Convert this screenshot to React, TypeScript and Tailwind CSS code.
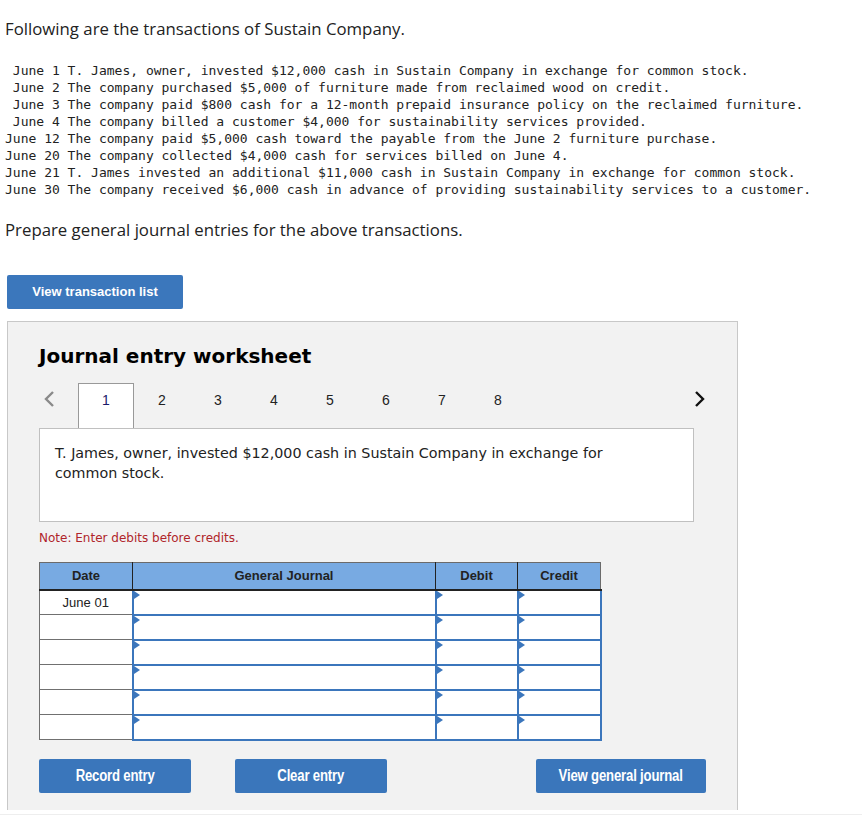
import React from "react";

const TRANSACTIONS = [
  " June 1 T. James, owner, invested $12,000 cash in Sustain Company in exchange for common stock.",
  " June 2 The company purchased $5,000 of furniture made from reclaimed wood on credit.",
  " June 3 The company paid $800 cash for a 12-month prepaid insurance policy on the reclaimed furniture.",
  " June 4 The company billed a customer $4,000 for sustainability services provided.",
  "June 12 The company paid $5,000 cash toward the payable from the June 2 furniture purchase.",
  "June 20 The company collected $4,000 cash for services billed on June 4.",
  "June 21 T. James invested an additional $11,000 cash in Sustain Company in exchange for common stock.",
  "June 30 The company received $6,000 cash in advance of providing sustainability services to a customer.",
];

const sans = { fontFamily: "'Open Sans', Lato, sans-serif" };

// petit triangle bleu dans le coin des champs de saisie
function InputCell() {
  return (
    <td className="relative h-[25px] p-0 border-[2px] border-[#3b76bc] bg-white">
      <span className="absolute left-0 top-0 w-0 h-0 border-y-[4px] border-y-transparent border-l-[6px] border-l-[#3b76bc]" />
    </td>
  );
}

function BlueButton({ label, width }: { label: string; width: string }) {
  return (
    <button className={`${width} h-[34px] rounded-[2px] bg-[#3a76bb] text-white flex items-center justify-center`}>
      <span
        className="inline-block text-[16px] font-bold scale-x-[0.82] tracking-[-0.2px] whitespace-nowrap"
        style={{ fontFamily: "'Liberation Sans', Arial, sans-serif" }}
      >
        {label}
      </span>
    </button>
  );
}

export default function App() {
  const rows = [0, 1, 2, 3, 4, 5];
  return (
    <div className="w-[862px] h-[819px] bg-white overflow-hidden relative">
      <div className="pl-[5px] pt-[19px]">
        <p className="text-[16.8px] leading-[20px] text-[#222]" style={sans}>
          Following are the transactions of Sustain Company.
        </p>

        <pre
          className="mt-[23px] text-[13px] leading-[17px] text-[#222]"
          style={{ fontFamily: "'DejaVu Sans Mono', monospace" }}
        >
          {TRANSACTIONS.join("\n")}
        </pre>

        <p className="mt-[22px] text-[16.8px] leading-[20px] text-[#222]" style={sans}>
          Prepare general journal entries for the above transactions.
        </p>
      </div>

      <div className="pl-[7px] mt-[35px]">
        <button
          className="w-[176px] h-[34px] rounded-[2px] bg-[#3b77bc] text-white text-[13px] font-bold"
          style={{ fontFamily: "'Liberation Sans', Arial, sans-serif" }}
        >
          View transaction list
        </button>
      </div>

      {/* panneau du worksheet */}
      <div className="ml-[7px] mt-[12px] w-[731px] h-[489px] bg-[#f2f2f2] border-x border-t border-[#c8c8c8] pl-[31px] pt-[20px]">
        <h2
          className="text-[20px] leading-[28px] font-bold text-black"
          style={{ fontFamily: "'DejaVu Sans', Verdana, sans-serif" }}
        >
          Journal entry worksheet
        </h2>

        <div className="flex items-start mt-[13px] w-[668px]">
          <div className="w-[39px] h-[32px] flex items-center pl-[3px]">
            <svg width="14" height="18" viewBox="0 0 14 18">
              <path d="M11 2 L4 9 L11 16" fill="none" stroke="#8a8a8a" strokeWidth="2.4" />
            </svg>
          </div>
          {[1, 2, 3, 4, 5, 6, 7, 8].map((n) => (
            <div
              key={n}
              className={`w-[56px] h-[45px] flex justify-center pt-[7px] text-[14px] leading-[18px] ${
                n === 1
                  ? "bg-white border-x border-t border-[#999] relative -mb-px z-10 text-[#1a1a6a]"
                  : "text-[#222] border-t border-transparent"
              }`}
              style={{ fontFamily: "'Liberation Sans', Arial, sans-serif" }}
            >
              {n}
            </div>
          ))}
          <div className="flex-1" />
          <div className="h-[32px] flex items-center">
            <svg width="14" height="18" viewBox="0 0 14 18">
              <path d="M3 2 L10 9 L3 16" fill="none" stroke="#111" strokeWidth="2.4" />
            </svg>
          </div>
        </div>

        <div
          className="w-[655px] h-[94px] bg-white border border-[#c0c0c0] pl-[15px] pr-[50px] pt-[14px] text-[14.3px] leading-[20px] text-[#222]"
          style={{ fontFamily: "'DejaVu Sans', Verdana, sans-serif" }}
        >
          T. James, owner, invested $12,000 cash in Sustain Company in exchange for common stock.
        </div>

        <p
          className="mt-[8px] text-[12px] leading-[16px] text-[#b0252a]"
          style={{ fontFamily: "'DejaVu Sans', Verdana, sans-serif" }}
        >
          Note: Enter debits before credits.
        </p>

        <table
          className="mt-[16px] border-collapse w-[561px] table-fixed"
          style={{ fontFamily: "'Liberation Sans', Arial, sans-serif" }}
        >
          <colgroup>
            <col className="w-[93px]" />
            <col className="w-[303px]" />
            <col className="w-[82px]" />
            <col className="w-[83px]" />
          </colgroup>
          <thead>
            <tr className="bg-[#78aae2] h-[27px] text-[13px] font-bold text-[#222]">
              <th className="border border-[#6b6b6b] border-b-[2px] border-b-[#222] border-r-[#222]">Date</th>
              <th className="border border-[#6b6b6b] border-b-[2px] border-b-[#222] border-r-[#222]">General Journal</th>
              <th className="border border-[#6b6b6b] border-b-[2px] border-b-[#222] border-r-[#222]">Debit</th>
              <th className="border border-[#6b6b6b] border-b-[2px] border-b-[#222]">Credit</th>
            </tr>
          </thead>
          <tbody>
            {rows.map((r) => (
              <tr key={r} className="h-[25px]">
                <td className="border border-[#707070] bg-white text-center text-[13px] text-[#222] p-0">
                  {r === 0 ? "June 01" : ""}
                </td>
                <InputCell />
                <InputCell />
                <InputCell />
              </tr>
            ))}
          </tbody>
        </table>

        <div className="flex mt-[18px] w-[667px]">
          <BlueButton label="Record entry" width="w-[152px]" />
          <div className="w-[44px]" />
          <BlueButton label="Clear entry" width="w-[152px]" />
          <div className="flex-1" />
          <BlueButton label="View general journal" width="w-[170px]" />
        </div>
      </div>
      <div className="absolute left-0 right-0 top-[814px] h-px bg-[#eeeeee]" />
    </div>
  );
}
